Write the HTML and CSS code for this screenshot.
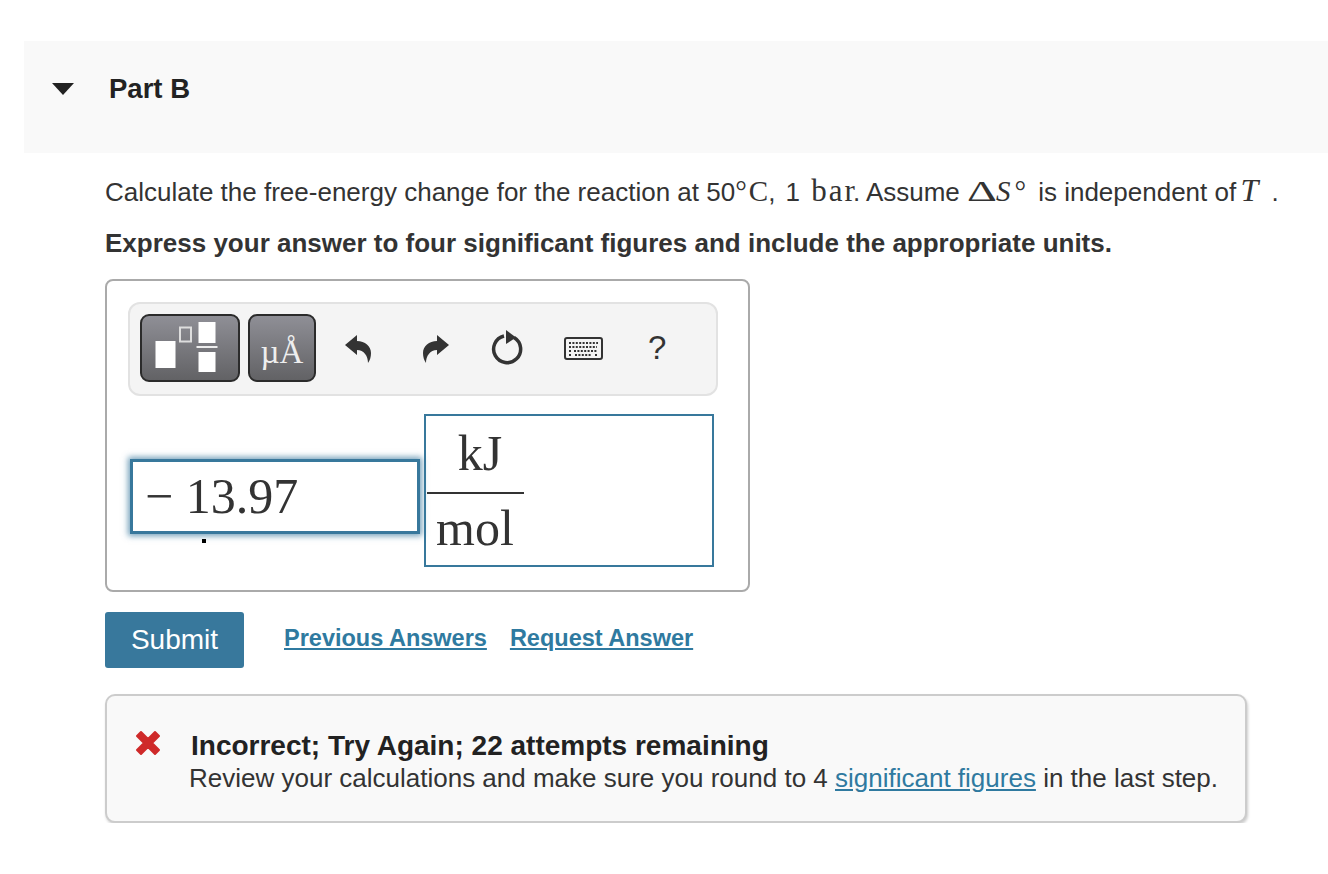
FILE: index.html
```html
<!DOCTYPE html>
<html lang="en">

<head>
    <meta charset="UTF-8">
    <title>Part B</title>
    <link rel="stylesheet" href="styles.css">
</head>

<body>
    <div class="partHeader">
        <span class="arrow"></span>
        <h2 class="partTitle">Part B</h2>
    </div>

    <div class="content">
        <p class="question">Calculate the free-energy change for the reaction at 50<span class="math degC">&deg;<span class="cLetter">C</span></span>, <span class="oneDigit">1</span> <span class="math barWord">bar</span>. Assume <span class="math"><span class="delta">&Delta;</span><i>S</i><span class="sDegree">&deg;</span></span><span class="isGap">is independent of</span> <span class="math tLetter"><i>T</i></span> .</p>
        <p class="instruction">Express your answer to four significant figures and include the appropriate units.</p>

        <div class="answerBox">
            <div class="toolbar">
                <button class="toolBtn templates" aria-label="Templates">
                    <svg width="76" height="56" viewBox="0 0 76 56">
                        <rect x="3.500" y="21" width="20" height="27" fill="#fff" />
                        <rect x="28" y="7.500" width="11" height="14" fill="none" stroke="#ddd" stroke-width="2" />
                        <rect x="46.500" y="2" width="17" height="21" fill="#fff" />
                        <rect x="44.500" y="26" width="21" height="2" fill="#eee" />
                        <rect x="46.500" y="32" width="17" height="20" fill="#fff" />
                    </svg>
                </button>
                <button class="toolBtn units">&micro;&#197;</button>
                <svg class="icon undo" width="28" height="32" viewBox="0 0 28 32">
                    <path d="M1 13 L13 3 L13 9 C21 9 27 14 27 21 C27 25 26 28 24 31 C24 24 20 18 13 18 L13 23 Z" fill="#333" />
                </svg>
                <svg class="icon redo" width="28" height="32" viewBox="0 0 28 32">
                    <path d="M27 13 L15 3 L15 9 C7 9 1 14 1 21 C1 25 2 28 4 31 C4 24 8 18 15 18 L15 23 Z" fill="#333" />
                </svg>
                <svg class="icon reset" width="34" height="38" viewBox="0 0 34 38">
                    <path d="M23 8.500 A13.500 13.500 0 1 1 13 7" fill="none" stroke="#333" stroke-width="3.500" />
                    <path d="M15 1 L25 8.500 L15 15 Z" fill="#333" />
                </svg>
                <svg class="icon keyboard" width="40" height="26" viewBox="0 0 40 26">
                    <rect x="1" y="3" width="37" height="21" rx="2" fill="none" stroke="#333" stroke-width="2" />
                    <path d="M5 8 H34 M5 12 H33 M5 16 H8 M10 16 H33 M5 20 H8 M11 20 H28 M31 20 H34" stroke="#333" stroke-width="2" stroke-dasharray="2 1.400" />
                </svg>
                <span class="help">?</span>
            </div>

            <div class="answerRow">
                <div class="valueWrap">
                    <div class="valueInput">&minus; 13.97</div>
                    <span class="caretDot"></span>
                </div>
                <div class="unitsInput">
                    <div class="fraction">
                        <span class="numerator">kJ</span>
                        <span class="denominator">mol</span>
                    </div>
                </div>
            </div>
        </div>

        <div class="actions">
            <button class="submitBtn">Submit</button>
            <a href="#" class="actionLink firstLink">Previous Answers</a>
            <a href="#" class="actionLink">Request Answer</a>
        </div>

        <div class="feedback">
            <svg class="crossIcon" width="28" height="28" viewBox="0 0 28 28">
                <path d="M3 7 L7 3 L14 10 L21 3 L25 7 L18 14 L25 21 L21 25 L14 18 L7 25 L3 21 L10 14 Z" fill="#cf2a2a" stroke="#cf2a2a" stroke-width="2" stroke-linejoin="round" />
            </svg>
            <div class="feedbackText">
                <div class="feedbackTitle">Incorrect; Try Again; 22 attempts remaining</div>
                <div class="feedbackHint">Review your calculations and make sure you round to 4 <a href="#">significant figures</a> in the last step.</div>
            </div>
        </div>
    </div>
</body>

</html>
```

FILE: styles.css
```css
body {
    margin: 0;
    padding-top: 41px;
    font-family: "Liberation Sans", Arial, sans-serif;
    color: #333;
    background-color: #fff;
}

.partHeader {
    box-sizing: border-box;
    display: flex;
    align-items: center;
    height: 112px;
    padding-bottom: 16px;
    margin-left: 24px;
    background-color: #f9f9f9;
}

.arrow {
    width: 0;
    height: 0;
    margin-left: 28px;
    margin-top: -1px;
    border-left: 11px solid transparent;
    border-right: 11px solid transparent;
    border-top: 12px solid #222;
}

.partTitle {
    margin: 0 0 0 35px;
    font-size: 27.500px;
    font-weight: bold;
    color: #222;
}

.content {
    padding-left: 105px;
}

.question {
    margin: 24px 0 0;
    font-size: 26px;
    line-height: 30px;
    white-space: nowrap;
}

.math {
    font-family: "Liberation Serif", serif;
    font-size: 29px;
    line-height: 20px;
}

.cLetter {
    margin-left: 2px;
}

.oneDigit {
    margin-left: 3px;
}

.barWord {
    margin-left: 4px;
    margin-right: -4px;
    font-size: 31px;
    letter-spacing: 2px;
}

.delta {
    display: inline-block;
    width: 29px;
    transform: scaleX(1.600);
    transform-origin: left;
}

.sDegree {
    margin-left: 4px;
}

.isGap {
    margin-left: 12px;
}

.tLetter {
    margin-left: -3px;
    margin-right: 6px;
    font-size: 32px;
}

.instruction {
    margin: 21px 0 0;
    font-size: 26px;
    font-weight: bold;
    line-height: 30px;
    white-space: nowrap;
}

.answerBox {
    box-sizing: border-box;
    width: 645px;
    height: 313px;
    margin-top: 21px;
    padding: 21px 21px 0;
    border: 2px solid #aaa;
    border-radius: 8px;
}

.toolbar {
    box-sizing: border-box;
    display: flex;
    align-items: center;
    width: 590px;
    height: 94px;
    padding-left: 10px;
    padding-bottom: 2px;
    background-color: #f4f4f4;
    border: 2px solid #e2e2e2;
    border-radius: 12px;
}

.toolBtn {
    box-sizing: border-box;
    display: flex;
    align-items: center;
    justify-content: center;
    height: 68px;
    padding: 0;
    color: #fff;
    background: linear-gradient(#8f8f96, #626265);
    border: 2px solid #2b2b2b;
    border-radius: 9px;
}

.templates {
    width: 100px;
    margin-right: 8px;
}

.units {
    width: 68px;
    padding-top: 8px;
    font-family: "Liberation Serif", serif;
    font-size: 33px;
    color: #eee;
}

.undo {
    margin-left: 28px;
}

.redo {
    margin-left: 50px;
}

.reset {
    margin-left: 41px;
}

.keyboard {
    margin-left: 39px;
}

.help {
    margin-left: 44px;
    font-size: 33px;
}

.answerRow {
    display: flex;
    margin-top: 18px;
    margin-left: 2px;
}

.valueWrap {
    position: relative;
    margin-top: 45px;
}

.valueInput {
    box-sizing: border-box;
    width: 290px;
    height: 75px;
    padding-left: 12px;
    font-family: "Liberation Serif", serif;
    font-size: 50px;
    line-height: 68px;
    border: 3px solid #38789c;
    box-shadow: 0 0 6px 2px rgba(56, 120, 156, 0.7);
}

.caretDot {
    position: absolute;
    left: 72px;
    top: 80px;
    width: 4px;
    height: 4px;
    background-color: #000;
}

.unitsInput {
    box-sizing: border-box;
    width: 290px;
    height: 153px;
    margin-left: 4px;
    padding: 11px 0 0 1px;
    border: 2px solid #38789c;
}

.fraction {
    display: inline-flex;
    flex-direction: column;
    align-items: center;
    width: 97px;
    font-family: "Liberation Serif", serif;
    font-size: 50px;
}

.numerator {
    width: 100%;
    height: 65px;
    line-height: 52px;
    text-align: center;
    text-indent: 9px;
    border-bottom: 2px solid #333;
}

.denominator {
    margin-right: 1px;
    line-height: 68px;
}

.actions {
    display: flex;
    align-items: center;
    margin-top: 20px;
}

.submitBtn {
    width: 139px;
    height: 56px;
    padding: 0;
    font-family: "Liberation Sans", Arial, sans-serif;
    font-size: 28px;
    color: #fff;
    background-color: #38789c;
    border: none;
    border-radius: 3px;
}

.actionLink {
    margin-left: 23px;
    margin-top: -4px;
    font-size: 23.500px;
    font-weight: bold;
    color: #2f7aa0;
    text-decoration: underline;
}

.firstLink {
    margin-left: 40px;
}

.feedback {
    box-sizing: border-box;
    display: flex;
    width: 1142px;
    height: 129px;
    margin-top: 26px;
    padding: 33px 0 0 27px;
    background-color: #f9f9f9;
    border: 2px solid #ccc;
    border-radius: 10px;
    box-shadow: 1px 2px 3px rgba(0, 0, 0, 0.2);
}

.crossIcon {
    flex: none;
}

.feedbackText {
    margin-left: 27px;
    font-size: 26px;
    line-height: 33px;
    white-space: nowrap;
}

.feedbackTitle {
    margin-left: 2px;
    font-size: 28px;
    font-weight: bold;
    color: #222;
}

.feedbackHint a {
    color: #2f7aa0;
}
```
